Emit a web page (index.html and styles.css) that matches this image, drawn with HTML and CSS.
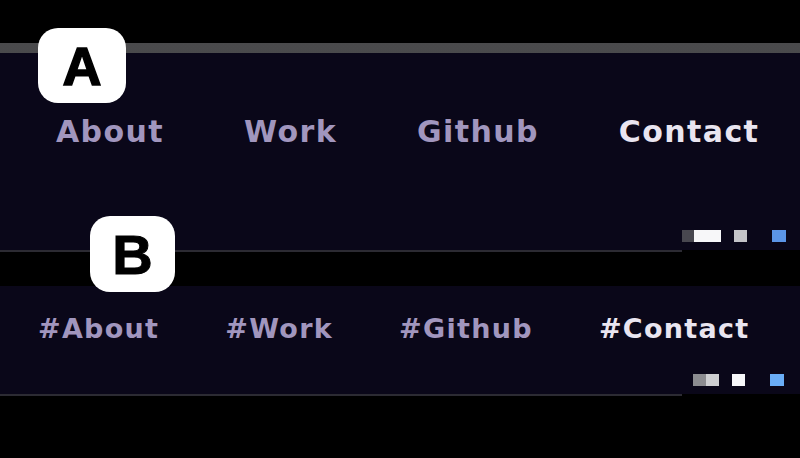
FILE: index.html
```html
<!DOCTYPE html>
<html lang="en">
<head>
<meta charset="utf-8">
<title>Nav variants</title>
<link rel="stylesheet" href="styles.css">
</head>
<body>
<div class="stage">
  <div class="top-gap"></div>
  <section class="panel panel-a">
    <nav class="nav nav-a">
      <a class="link">About</a>
      <a class="link">Work</a>
      <a class="link">Github</a>
      <a class="link active">Contact</a>
    </nav>
    <div class="dots dots-a">
      <span class="sq sq-dark"></span><span class="sq sq-white wide"></span>
      <span class="sq sq-light gap1"></span>
      <span class="sq sq-blue gap2"></span>
    </div>
  </section>
  <div class="mid-gap"></div>
  <section class="panel panel-b">
    <nav class="nav nav-b">
      <a class="link">#About</a>
      <a class="link">#Work</a>
      <a class="link">#Github</a>
      <a class="link active">#Contact</a>
    </nav>
    <div class="dots dots-b">
      <span class="sq sq-mid"></span><span class="sq sq-light"></span>
      <span class="sq sq-white gap1"></span>
      <span class="sq sq-blue2 gap2"></span>
    </div>
  </section>
  <div class="badge badge-a">A</div>
  <div class="badge badge-b">B</div>
</div>
</body>
</html>
```
FILE: styles.css
```css
html, body {
  margin: 0;
  padding: 0;
  background: #000;
}
.stage {
  position: relative;
  width: 800px;
  height: 458px;
  overflow: hidden;
  background: #000;
}
.top-gap { height: 43px; }
.mid-gap { height: 36px; }
.panel {
  position: relative;
  background: #0a0719;
  box-sizing: border-box;
}
.panel-a {
  height: 207px;
  border-top: 10px solid transparent;
  border-image: linear-gradient(#4a4a4c, #686868 45%, #555 80%, #3a3a3e) 1;
  border-image-width: 10px 0 0 0;
}
.panel-a::after {
  content: "";
  position: absolute;
  left: 0;
  right: 0;
  bottom: -2px;
  height: 2px;
  background: #2c2b33;
}
.panel-b {
  height: 110px;
  border-bottom: 2px solid #2c2b33;
}
.nav {
  display: flex;
  align-items: center;
  font-family: "DejaVu Sans", "Inter", sans-serif;
  font-weight: 700;
}
.nav-a {
  padding: 61px 0 0 56px;
  gap: 80px;
  font-size: 30px;
  letter-spacing: 1.4px;
}
.nav-b {
  padding: 27px 0 0 38px;
  gap: 66px;
  font-size: 27px;
  letter-spacing: 1.3px;
}
.link {
  color: #a196be;
  text-decoration: none;
  line-height: 1.2;
}
.link.active { color: #e9e5f0; }
.dots {
  position: absolute;
  right: 0;
  bottom: -2px;
  width: 118px;
  height: 24px;
  background: linear-gradient(to bottom, transparent 22px, #000 22px);
  display: flex;
  align-items: flex-start;
  box-sizing: border-box;
  z-index: 1;
}
.dots-a { padding: 2px 0 0 0; }
.dots-b { padding: 2px 0 0 11px; }
.sq {
  display: block;
  width: 13px;
  height: 12px;
}
.wide { width: 27px; }
.gap1 { margin-left: 13px; }
.gap2 { margin-left: 25px; }
.sq-dark { width: 12px; background: #48474f; }
.sq-white { background: #f7f7f9; }
.sq-light { background: #c4c4c8; }
.sq-mid { background: #8c8c90; }
.sq-blue { width: 14px; background: #5b95e6; }
.sq-blue2 { width: 14px; background: #6aadf6; }
.dots-b .sq-light { background: #cfcfd2; }
.badge {
  position: absolute;
  background: #fff;
  color: #000;
  border-radius: 20px;
  display: flex;
  align-items: center;
  justify-content: center;
  font-family: "Liberation Sans", Arial, sans-serif;
  font-weight: 700;
  z-index: 2;
}
.badge-a {
  left: 38px;
  top: 28px;
  width: 88px;
  height: 75px;
  font-size: 54px;
  -webkit-text-stroke: 1.5px #000;
}
.badge-b {
  left: 90px;
  top: 216px;
  width: 85px;
  height: 76px;
  font-size: 56px;
  -webkit-text-stroke: 1px #000;
}
```
